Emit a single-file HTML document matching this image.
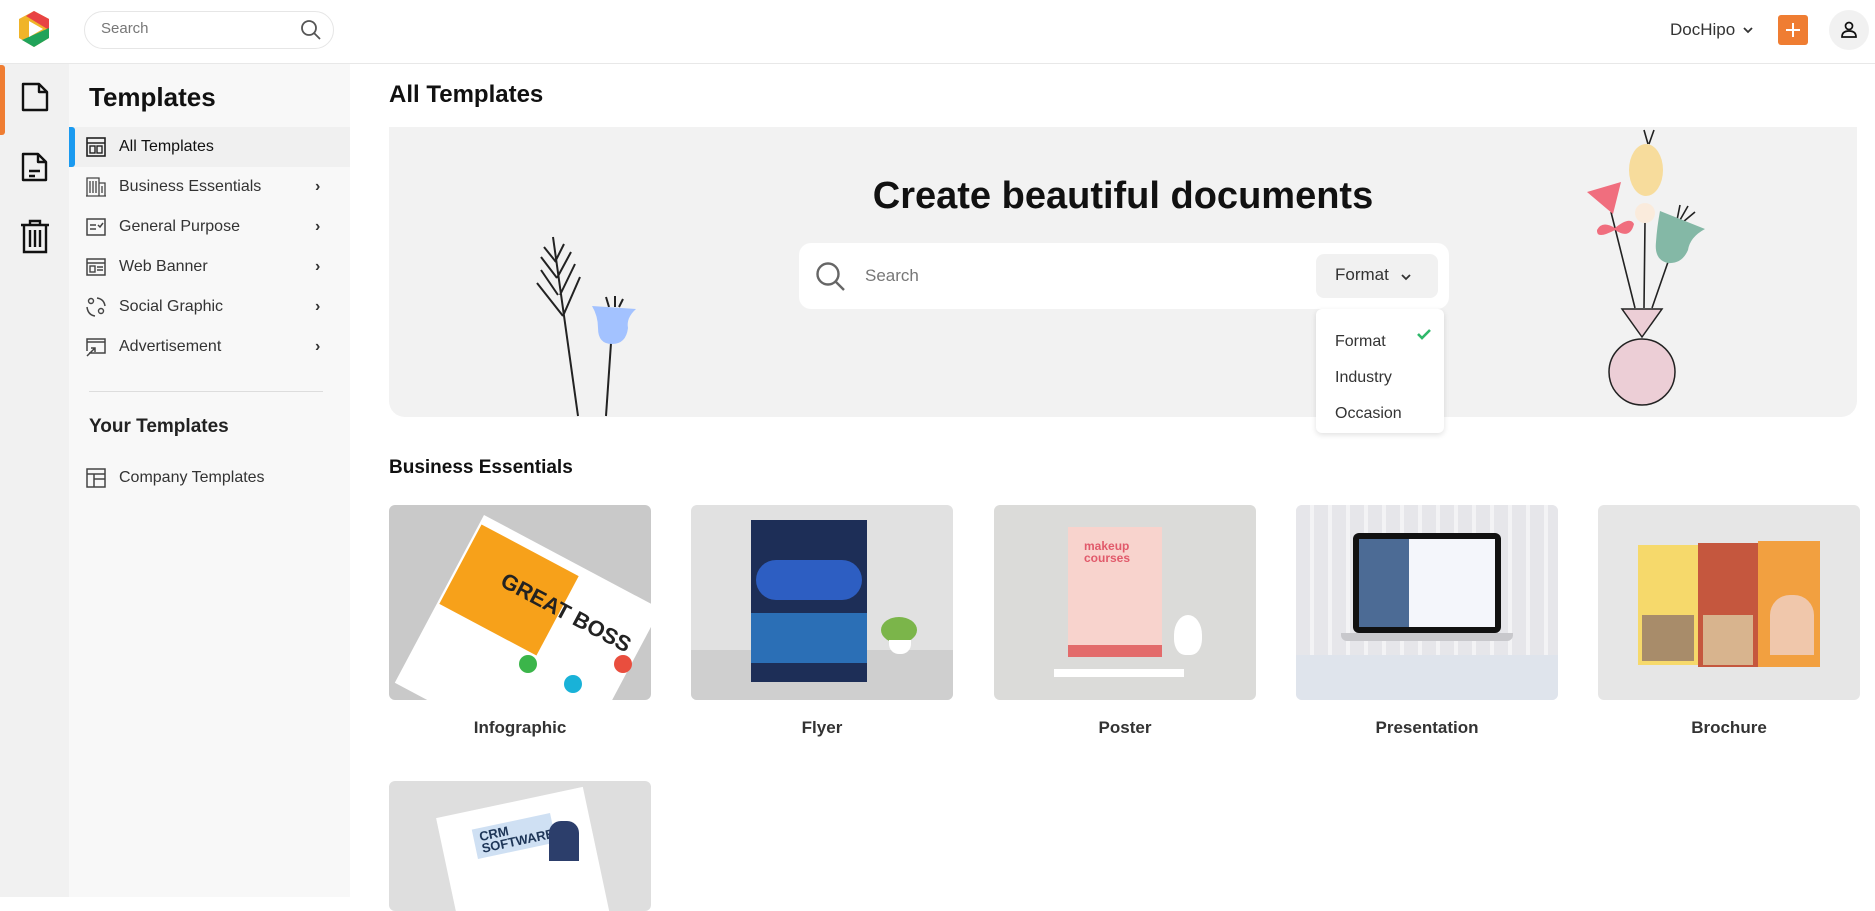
<!DOCTYPE html>
<html><head><meta charset="utf-8"><style>
*{box-sizing:border-box;margin:0;padding:0}
body{width:1875px;height:897px;overflow:hidden;background:#fff;font-family:"Liberation Sans",sans-serif;color:#222;position:relative}
.a{position:absolute}
.hdr{left:0;top:0;width:1875px;height:64px;border-bottom:1px solid #e8e8e8;background:#fff}
.rail{left:0;top:64px;width:69px;height:833px;background:#f1f1f1}
.side{left:69px;top:64px;width:281px;height:833px;background:#f8f8f8}
.item{position:absolute;left:0;width:281px;height:40px;font-size:16px;color:#333;display:flex;align-items:center}
.item span{position:absolute;left:50px}
.item .chev{position:absolute;left:246px;font-size:16px;color:#333}
.item svg{position:absolute;left:17px}
.card{position:absolute;top:505px;width:262px;height:195px;border-radius:6px;overflow:hidden}
.lbl{position:absolute;top:718px;width:262px;text-align:center;font-size:17px;font-weight:bold;color:#333}
</style></head><body>
<div class="a hdr"></div>
<svg class="a" style="left:16px;top:10px" width="36" height="38" viewBox="0 0 36 38">
<path d="M18 1 L33 9 L33 28 L18 37 L3 28 L3 9 Z" fill="#f0b429"/>
<path d="M18 1 L33 9 L33 20 L10 6 Z" fill="#e84343"/>
<path d="M33 18 L33 28 L18 37 L6 30 Z" fill="#21a35a"/>
<path d="M13 11 L27 19 L13 27 Z" fill="#fff"/>
</svg>
<div class="a" style="left:84px;top:11px;width:250px;height:38px;border:1px solid #e6e6e6;border-radius:19px"></div>
<div class="a" style="left:101px;top:20px;font-size:15px;color:#777">Search</div>
<svg class="a" style="left:300px;top:19px" width="22" height="22" viewBox="0 0 22 22"><circle cx="9" cy="9" r="7" fill="none" stroke="#555" stroke-width="1.8"/><path d="M14 14 L20 20" stroke="#555" stroke-width="1.8"/></svg>
<div class="a" style="left:1670px;top:20px;font-size:17px;color:#333">DocHipo</div>
<svg class="a" style="left:1742px;top:25px" width="12" height="10" viewBox="0 0 12 10"><path d="M2 3 L6 7 L10 3" fill="none" stroke="#333" stroke-width="1.8"/></svg>
<div class="a" style="left:1778px;top:15px;width:30px;height:30px;background:#ef7d32;border-radius:3px"></div>
<svg class="a" style="left:1783px;top:20px" width="20" height="20"><path d="M10 3 V17 M3 10 H17" stroke="#fff" stroke-width="2"/></svg>
<div class="a" style="left:1829px;top:10px;width:40px;height:40px;background:#f1f1f1;border-radius:50%"></div>
<svg class="a" style="left:1839px;top:20px" width="20" height="20" viewBox="0 0 20 20"><circle cx="10" cy="6" r="3.5" fill="none" stroke="#111" stroke-width="1.7"/><path d="M3 17 Q3 11 10 11 Q17 11 17 17 Z" fill="none" stroke="#111" stroke-width="1.7"/></svg>

<div class="a rail"></div>
<div class="a" style="left:0;top:65px;width:5px;height:70px;background:#ef7d32;border-radius:0 3px 3px 0"></div>
<svg class="a" style="left:20px;top:81px" width="30" height="32" viewBox="0 0 30 32"><path d="M3 3 H19 L27 11 V29 H3 Z M19 3 V11 H27" fill="none" stroke="#111" stroke-width="2.4" stroke-linejoin="round"/></svg>
<svg class="a" style="left:20px;top:151px" width="30" height="32" viewBox="0 0 30 32"><path d="M3 3 H18 L26 11 V29 H3 Z M18 3 V11 H26 M9 20 H20 M9 25 H15" fill="none" stroke="#111" stroke-width="2.4" stroke-linejoin="round"/></svg>
<svg class="a" style="left:19px;top:219px" width="32" height="36" viewBox="0 0 32 36"><path d="M2 6 H30 M11 6 V2 H21 V6 M5 6 V33 H27 V6 M11 11 V28 M16 11 V28 M21 11 V28" fill="none" stroke="#111" stroke-width="2.4"/></svg>

<div class="a side">
<div class="a" style="left:20px;top:18px;font-size:26px;font-weight:bold;color:#111">Templates</div>
<div class="item" style="top:63px;background:#f0f0f0"><div style="position:absolute;left:0;top:0;width:6px;height:40px;background:#1a9af0;border-radius:0 3px 3px 0"></div>
<svg width="20" height="20" viewBox="0 0 20 20"><rect x="1" y="1" width="18" height="18" fill="none" stroke="#222" stroke-width="1.6"/><path d="M1 6 H19" stroke="#222" stroke-width="1.6"/><rect x="4" y="9" width="5" height="7" fill="none" stroke="#222" stroke-width="1.4"/><rect x="11" y="9" width="5" height="7" fill="none" stroke="#222" stroke-width="1.4"/></svg><span style="color:#111">All Templates</span></div>
<div class="item" style="top:103px"><svg width="20" height="20" viewBox="0 0 20 20"><path d="M1 19 V1 H13 V19 M13 6 H19 V19 M0 19 H20 M4 4 V16 M7 4 V16 M10 4 V16 M16 9 V16" fill="none" stroke="#444" stroke-width="1.3"/></svg><span>Business Essentials</span><b class="chev">›</b></div>
<div class="item" style="top:143px"><svg width="20" height="20" viewBox="0 0 20 20"><rect x="1" y="2" width="18" height="16" fill="none" stroke="#444" stroke-width="1.5"/><path d="M4 8 H10 M4 12 H10 M12 8 L14 10 L17 6" fill="none" stroke="#444" stroke-width="1.5"/></svg><span>General Purpose</span><b class="chev">›</b></div>
<div class="item" style="top:183px"><svg width="20" height="20" viewBox="0 0 20 20"><rect x="1" y="2" width="18" height="16" fill="none" stroke="#444" stroke-width="1.5"/><path d="M1 6 H19 M11 10 H17 M11 13 H17" stroke="#444" stroke-width="1.4"/><rect x="4" y="9" width="5" height="6" fill="none" stroke="#444" stroke-width="1.4"/></svg><span>Web Banner</span><b class="chev">›</b></div>
<div class="item" style="top:223px"><svg width="20" height="20" viewBox="0 0 20 20"><circle cx="5" cy="4" r="2.5" fill="none" stroke="#444" stroke-width="1.4"/><circle cx="15" cy="14" r="2.5" fill="none" stroke="#444" stroke-width="1.4"/><path d="M1 10 Q2 18 9 19 M11 1 Q18 2 19 9" fill="none" stroke="#444" stroke-width="1.5"/></svg><span>Social Graphic</span><b class="chev">›</b></div>
<div class="item" style="top:263px"><svg width="20" height="20" viewBox="0 0 20 20"><path d="M3 16 H19 V2 H1 V14 M1 5 H19 M1 19 L9 11 M5 11 H9 V15" fill="none" stroke="#444" stroke-width="1.5"/></svg><span>Advertisement</span><b class="chev">›</b></div>
<div class="a" style="left:20px;top:327px;width:234px;height:1px;background:#ddd"></div>
<div class="a" style="left:20px;top:352px;font-size:19px;font-weight:bold;color:#222">Your Templates</div>
<div class="item" style="top:394px"><svg width="20" height="20" viewBox="0 0 20 20"><rect x="1" y="1" width="18" height="18" fill="none" stroke="#444" stroke-width="1.5"/><path d="M1 6 H19 M8 6 V19 M8 11 H19" stroke="#444" stroke-width="1.5"/></svg><span>Company Templates</span></div>
</div>

<div class="a" style="left:389px;top:81px;font-size:24px;font-weight:bold;color:#111">All Templates</div>
<div class="a" style="left:389px;top:127px;width:1468px;height:290px;background:#f2f2f2;border-radius:0 0 16px 16px"></div>
<div class="a" style="left:389px;top:175px;width:1468px;text-align:center;font-size:38px;font-weight:bold;color:#111">Create beautiful documents</div>
<div class="a" style="left:799px;top:243px;width:650px;height:66px;background:#fff;border-radius:12px"></div>
<svg class="a" style="left:815px;top:261px" width="32" height="32" viewBox="0 0 32 32"><circle cx="13" cy="13" r="10.5" fill="none" stroke="#666" stroke-width="2.4"/><path d="M21 21 L29 29" stroke="#666" stroke-width="2.4"/></svg>
<div class="a" style="left:865px;top:266px;font-size:17px;color:#777">Search</div>
<div class="a" style="left:1316px;top:254px;width:122px;height:44px;background:#f1f1f1;border-radius:8px"></div>
<div class="a" style="left:1335px;top:265px;font-size:17px;color:#333">Format</div>
<svg class="a" style="left:1400px;top:272px" width="12" height="10"><path d="M2 3 L6 7 L10 3" fill="none" stroke="#333" stroke-width="1.8"/></svg>
<div class="a" style="left:1316px;top:309px;width:128px;height:124px;background:#fff;border-radius:6px;box-shadow:0 2px 6px rgba(0,0,0,.12)"></div>
<div class="a" style="left:1335px;top:324px;font-size:16px;color:#333;line-height:36px">Format<br>Industry<br>Occasion</div>
<svg class="a" style="left:1416px;top:327px" width="16" height="14"><path d="M2 7 L6 11 L14 3" fill="none" stroke="#2fb86a" stroke-width="2.6"/></svg>

<svg class="a" style="left:0;top:0" width="1875" height="897" viewBox="0 0 1875 897" fill="none">
<g stroke="#222" stroke-width="2">
<path d="M578 416 L553 237 M563 316 L537 283 M563 316 L580 277 M558 295 L541 270 M560 295 L575 264 M557 278 L541 257 M557 278 L571 252 M556 262 L544 247 M555 262 L564 244"/>
<path d="M606 416 L611 343 M609 307 L606 297 M615 307 L615 296 M619 307 L623 299"/>
</g>
<path d="M592 306 L636 309 Q626 318 628 328 Q626 344 612 344 Q598 344 598 328 Q598 316 592 306 Z" fill="#a3c2ff"/>
<g transform="translate(32,-8)">
<g stroke="#222" stroke-width="1.6">
<path d="M1603 316 L1579 220 M1612 316 L1613 230 M1620 316 L1636 270 M1616 152 L1612 138 M1617 152 L1622 138"/>
<path d="M1645 228 L1648 213 M1648 228 L1656 214 M1651 230 L1663 220"/>
</g>
<ellipse cx="1614" cy="178" rx="17" ry="26" fill="#f7dc9c"/>
<circle cx="1613" cy="221" r="10" fill="#faebdc"/>
<path d="M1555 200 L1589 190 L1581 222 Z" fill="#f06e7e"/>
<path d="M1583 236 Q1570 228 1565 238 Q1564 248 1583 238 Q1598 248 1602 232 Q1598 224 1583 236 Z" fill="#f06e7e"/>
<path d="M1628 219 L1673 237 Q1658 245 1656 258 Q1650 272 1636 271 Q1622 268 1624 250 Q1625 235 1628 219 Z" fill="#84b8a6"/>
<path d="M1590 317 L1630 317 L1610 345 Z" fill="#ecced6" stroke="#222" stroke-width="1.5"/>
<circle cx="1610" cy="380" r="33" fill="#ecced6" stroke="#222" stroke-width="1.5"/>
</g>
</svg>

<div class="a" style="left:389px;top:457px;font-size:19px;font-weight:bold;color:#111">Business Essentials</div>

<div class="card" style="left:389px;background:#c9c9c9">
<div class="a" style="width:200px;height:190px;background:#fff;transform:rotate(28deg);transform-origin:0 0;left:95px;top:10px"></div>
<div class="a" style="left:65px;top:40px;width:110px;height:90px;background:#f7a11a;transform:rotate(28deg)"></div>
<div class="a" style="left:105px;top:95px;font-size:22px;font-weight:bold;color:#222;transform:rotate(28deg)">GREAT BOSS</div>
<div class="a" style="left:130px;top:150px;width:18px;height:18px;border-radius:50%;background:#3bb54a"></div>
<div class="a" style="left:225px;top:150px;width:18px;height:18px;border-radius:50%;background:#e94e3e"></div>
<div class="a" style="left:175px;top:170px;width:18px;height:18px;border-radius:50%;background:#19b2d8"></div>
</div>
<div class="lbl" style="left:389px">Infographic</div>

<div class="card" style="left:691px;background:#e1e1e1">
<div class="a" style="left:0;top:145px;width:262px;height:50px;background:#cfcfcf"></div>
<div class="a" style="left:60px;top:15px;width:116px;height:162px;background:#1d2e57"></div>
<div class="a" style="left:65px;top:55px;width:106px;height:40px;background:#2d5ec2;border-radius:20px"></div>
<div class="a" style="left:60px;top:108px;width:116px;height:50px;background:#2b6fb6"></div>
<div class="a" style="left:190px;top:112px;width:36px;height:26px;background:#7bb54a;border-radius:50%"></div>
<div class="a" style="left:198px;top:135px;width:22px;height:14px;background:#fff;border-radius:0 0 10px 10px"></div>
</div>
<div class="lbl" style="left:691px">Flyer</div>

<div class="card" style="left:994px;background:#dbdbd9">
<div class="a" style="left:74px;top:22px;width:94px;height:130px;background:#f8d3cd"></div>
<div class="a" style="left:74px;top:140px;width:94px;height:12px;background:#e36b6b"></div>
<div class="a" style="left:90px;top:35px;font-size:12px;color:#e15a6b;font-weight:bold;line-height:12px">makeup<br>courses</div>
<div class="a" style="left:180px;top:110px;width:28px;height:40px;background:#fff;border-radius:50% 50% 40% 40%"></div>
<div class="a" style="left:60px;top:164px;width:130px;height:8px;background:#fff"></div>
</div>
<div class="lbl" style="left:994px">Poster</div>

<div class="card" style="left:1296px;background:#ececf0">
<div class="a" style="left:0;top:0;width:262px;height:150px;background:repeating-linear-gradient(90deg,#e6e6ea 0 14px,#f3f3f5 14px 18px)"></div>
<div class="a" style="left:0;top:150px;width:262px;height:45px;background:#dfe4ec"></div>
<div class="a" style="left:57px;top:28px;width:148px;height:100px;background:#111;border-radius:6px"></div>
<div class="a" style="left:63px;top:34px;width:136px;height:88px;background:#f4f6fb"></div>
<div class="a" style="left:63px;top:34px;width:50px;height:88px;background:#4c6b95"></div>
<div class="a" style="left:45px;top:128px;width:172px;height:8px;background:#c8c8cc;border-radius:0 0 6px 6px"></div>
</div>
<div class="lbl" style="left:1296px">Presentation</div>

<div class="card" style="left:1598px;background:#e6e6e6">
<div class="a" style="left:40px;top:40px;width:60px;height:120px;background:#f6d96b"></div>
<div class="a" style="left:100px;top:38px;width:60px;height:124px;background:#c5573e"></div>
<div class="a" style="left:160px;top:36px;width:62px;height:126px;background:#f2a040"></div>
<div class="a" style="left:105px;top:110px;width:50px;height:50px;background:#d8b48e"></div>
<div class="a" style="left:172px;top:90px;width:44px;height:60px;background:#f0c7ab;border-radius:20px 20px 0 0"></div>
<div class="a" style="left:44px;top:110px;width:52px;height:46px;background:#a88c6a"></div>
</div>
<div class="lbl" style="left:1598px">Brochure</div>

<div class="card" style="left:389px;top:781px;height:130px;background:#dedede">
<div class="a" style="left:60px;top:20px;width:150px;height:140px;background:#fff;transform:rotate(-12deg)"></div>
<div class="a" style="left:85px;top:40px;width:80px;height:30px;background:#cfe0f3;font-size:13px;font-weight:bold;color:#1d3557;padding:3px 6px;line-height:12px;transform:rotate(-12deg)">CRM<br>SOFTWARE</div>
<div class="a" style="left:160px;top:40px;width:30px;height:40px;background:#2c3e6b;border-radius:12px 12px 0 0"></div>
</div>
</body></html>
